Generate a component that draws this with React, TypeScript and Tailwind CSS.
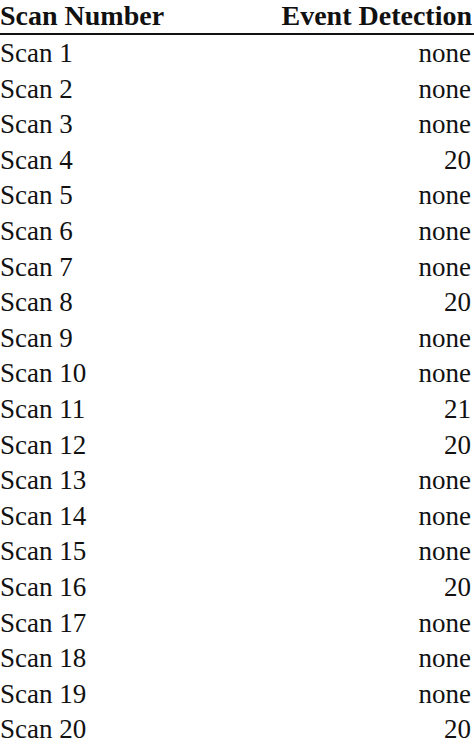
import React from "react";

const rows: [string, string][] = [
  ["Scan 1", "none"],
  ["Scan 2", "none"],
  ["Scan 3", "none"],
  ["Scan 4", "20"],
  ["Scan 5", "none"],
  ["Scan 6", "none"],
  ["Scan 7", "none"],
  ["Scan 8", "20"],
  ["Scan 9", "none"],
  ["Scan 10", "none"],
  ["Scan 11", "21"],
  ["Scan 12", "20"],
  ["Scan 13", "none"],
  ["Scan 14", "none"],
  ["Scan 15", "none"],
  ["Scan 16", "20"],
  ["Scan 17", "none"],
  ["Scan 18", "none"],
  ["Scan 19", "none"],
  ["Scan 20", "20"],
];

export default function App() {
  return (
    <div
      className="w-[474px] h-[746px] overflow-hidden bg-white text-[#111]"
      style={{ fontFamily: '"Liberation Serif", "Times New Roman", serif' }}
    >
      <div className="flex justify-between pt-[1px] pb-[2px] border-b-[2px] border-[#111] text-[28px] leading-[30px] font-bold">
        <span>Scan Number</span>
        <span className="pr-[2px]">Event Detection</span>
      </div>
      <div className="flex flex-col pt-[1px]">
        {rows.map(([a, b]) => (
          <div
            key={a}
            className="flex justify-between text-[27px] leading-[35.6px]"
          >
            <span>{a}</span>
            <span className="pr-[3px]">{b}</span>
          </div>
        ))}
      </div>
    </div>
  );
}
